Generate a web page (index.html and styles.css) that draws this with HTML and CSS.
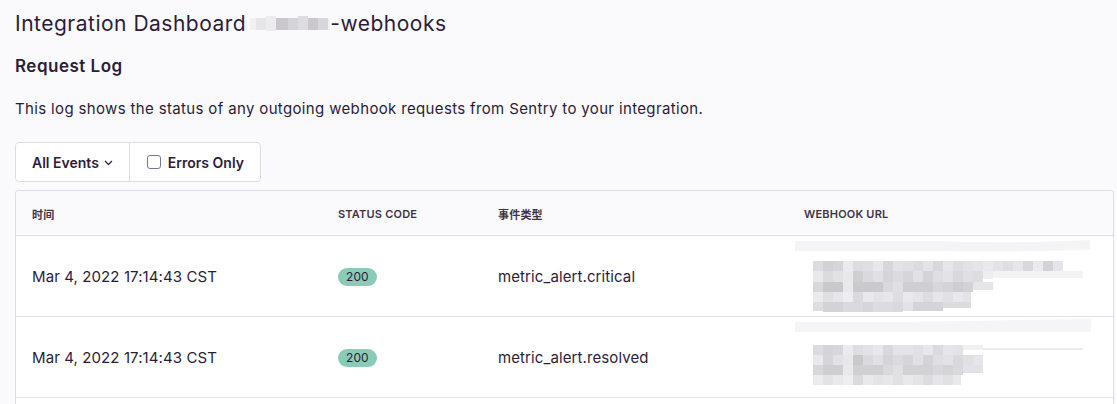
FILE: index.html
```html
<!DOCTYPE html>
<html lang="en">
<head>
<meta charset="utf-8">
<title>Integration Dashboard</title>
<link rel="stylesheet" href="styles.css">
</head>
<body>
<div class="page">
  <h1 class="title">Integration Dashboard <svg class="blur-title" width="80" height="18" viewBox="0 0 80 18"><rect x="0" y="3" width="80" height="12" fill="#f1f0f2"/><rect x="6" y="3" width="10" height="12" fill="#e6e5e8"/><rect x="16" y="1" width="10" height="15" fill="#ecebee"/><rect x="26" y="3" width="12" height="12" fill="#c9c7cc"/><rect x="38" y="3" width="10" height="12" fill="#d4d3d7"/><rect x="48" y="1" width="10" height="14" fill="#dddce0"/><rect x="58" y="3" width="10" height="12" fill="#cac8cd"/><rect x="68" y="3" width="10" height="12" fill="#d8d7db"/></svg>-webhooks</h1>
  <h2 class="section-title">Request Log</h2>
  <p class="description">This log shows the status of any outgoing webhook requests from Sentry to your integration.</p>

  <div class="filters">
    <button class="filter-btn">All Events <svg class="chevron" width="9" height="6" viewBox="0 0 9 6"><path d="M1 1l3.5 3.5L8 1" fill="none" stroke="#2b1d38" stroke-width="1.2"/></svg></button>
    <label class="filter-btn check"><span class="checkbox"></span>Errors Only</label>
  </div>

  <div class="panel">
    <div class="row head">
      <div>时间</div>
      <div>STATUS CODE</div>
      <div>事件类型</div>
      <div>WEBHOOK URL</div>
    </div>
    <div class="row">
      <div>Mar 4, 2022 17:14:43 CST</div>
      <div><span class="badge">200</span></div>
      <div>metric_alert.critical</div>
      <div class="url">
        <svg width="305" height="78" viewBox="0 0 305 78">
          <path d="M0 5 H140 Q220 8 295 4 V14 Q220 16 140 15 H0 Z" fill="#f4f3f6"/>
          <g>
            <rect x="18" y="25" width="10" height="10" fill="#dcdbde"/><rect x="28" y="25" width="10" height="10" fill="#d2d1d5"/><rect x="38" y="25" width="10" height="10" fill="#d6d5d9"/><rect x="48" y="25" width="10" height="10" fill="#ebeaed"/><rect x="58" y="25" width="10" height="10" fill="#dddce0"/><rect x="68" y="25" width="10" height="10" fill="#dfdee2"/><rect x="78" y="25" width="10" height="10" fill="#e8e7ea"/><rect x="88" y="25" width="10" height="10" fill="#d7d6da"/><rect x="98" y="25" width="10" height="10" fill="#e3e2e6"/><rect x="108" y="25" width="10" height="10" fill="#e0dfe3"/><rect x="118" y="25" width="10" height="10" fill="#dcdbdf"/><rect x="128" y="25" width="10" height="10" fill="#e4e3e7"/><rect x="138" y="25" width="10" height="10" fill="#d8d7db"/><rect x="148" y="25" width="10" height="10" fill="#e6e5e9"/><rect x="158" y="25" width="10" height="10" fill="#dedde1"/><rect x="168" y="25" width="10" height="10" fill="#e2e1e5"/><rect x="178" y="25" width="10" height="10" fill="#e5e4e8"/><rect x="188" y="25" width="10" height="10" fill="#eae9ec"/><rect x="198" y="25" width="10" height="10" fill="#e4e3e7"/><rect x="208" y="25" width="10" height="10" fill="#dfdee2"/><rect x="218" y="25" width="10" height="10" fill="#e6e5e9"/><rect x="228" y="25" width="10" height="10" fill="#d9d8dc"/><rect x="238" y="25" width="10" height="10" fill="#eceaee"/><rect x="248" y="25" width="10" height="10" fill="#d3d2d6"/><rect x="258" y="25" width="10" height="10" fill="#e5e4e8"/>
            <rect x="18" y="35" width="10" height="11" fill="#e9e8eb"/><rect x="28" y="35" width="10" height="11" fill="#dbdadd"/><rect x="38" y="35" width="10" height="11" fill="#e2e1e4"/><rect x="48" y="35" width="10" height="11" fill="#e8e7ea"/><rect x="58" y="35" width="10" height="11" fill="#cfced2"/><rect x="68" y="35" width="10" height="11" fill="#dad9dd"/><rect x="78" y="35" width="10" height="11" fill="#e1e0e4"/><rect x="88" y="35" width="10" height="11" fill="#d5d4d8"/><rect x="98" y="35" width="10" height="11" fill="#dbdade"/><rect x="108" y="35" width="10" height="11" fill="#d6d5d9"/><rect x="118" y="35" width="10" height="11" fill="#e1e0e4"/><rect x="128" y="35" width="10" height="11" fill="#d4d3d7"/><rect x="138" y="35" width="10" height="11" fill="#dfdee2"/><rect x="148" y="35" width="10" height="11" fill="#e3e2e6"/><rect x="158" y="35" width="10" height="11" fill="#d9d8dc"/><rect x="168" y="35" width="10" height="11" fill="#e0dfe3"/><rect x="178" y="35" width="10" height="11" fill="#dddce0"/><rect x="188" y="35" width="10" height="8" fill="#eeedf0"/><rect x="198" y="35" width="90" height="7" fill="#f3f2f5"/>
            <rect x="18" y="46" width="10" height="10" fill="#d8d7db"/><rect x="28" y="46" width="20" height="10" fill="#c9c8cc"/><rect x="48" y="46" width="10" height="10" fill="#e9e8eb"/><rect x="58" y="46" width="30" height="10" fill="#cac9cd"/><rect x="88" y="46" width="10" height="10" fill="#d9d8dc"/><rect x="98" y="46" width="10" height="10" fill="#e0dfe3"/><rect x="108" y="46" width="30" height="10" fill="#cfced2"/><rect x="138" y="46" width="10" height="10" fill="#d8d7db"/><rect x="148" y="46" width="10" height="10" fill="#d4d3d7"/><rect x="158" y="46" width="10" height="10" fill="#cecdd1"/><rect x="168" y="46" width="10" height="10" fill="#d3d2d6"/><rect x="178" y="46" width="20" height="8" fill="#e6e5e8"/>
            <rect x="18" y="56" width="10" height="10" fill="#ebeaed"/><rect x="28" y="56" width="10" height="10" fill="#e0dfe2"/><rect x="38" y="56" width="10" height="10" fill="#e6e5e8"/><rect x="48" y="56" width="10" height="10" fill="#eeedf0"/><rect x="58" y="56" width="10" height="10" fill="#dad9dc"/><rect x="68" y="56" width="10" height="10" fill="#e9e8eb"/><rect x="78" y="56" width="10" height="10" fill="#e4e3e6"/><rect x="88" y="56" width="10" height="10" fill="#e7e6e9"/><rect x="98" y="56" width="10" height="10" fill="#dedde0"/><rect x="108" y="56" width="10" height="10" fill="#e9e8eb"/><rect x="118" y="56" width="10" height="10" fill="#e5e4e7"/><rect x="128" y="56" width="10" height="10" fill="#dddce0"/><rect x="138" y="56" width="10" height="10" fill="#e6e5e8"/><rect x="148" y="56" width="10" height="10" fill="#e1e0e3"/><rect x="158" y="56" width="10" height="10" fill="#e9e8eb"/><rect x="168" y="56" width="8" height="10" fill="#e4e3e6"/>
            <rect x="18" y="66" width="10" height="9" fill="#dedde0"/><rect x="28" y="66" width="20" height="10" fill="#d3d2d6"/><rect x="48" y="66" width="20" height="10" fill="#dad9dd"/><rect x="68" y="66" width="10" height="10" fill="#d6d5d9"/><rect x="78" y="66" width="20" height="10" fill="#dcdbdf"/><rect x="98" y="66" width="10" height="10" fill="#d9d8dc"/><rect x="108" y="66" width="10" height="9" fill="#e3e2e6"/><rect x="118" y="66" width="30" height="9" fill="#d4d3d7"/><rect x="148" y="66" width="28" height="6" fill="#dcdbdf"/>
          </g>
        </svg>
      </div>
    </div>
    <div class="row">
      <div>Mar 4, 2022 17:14:43 CST</div>
      <div><span class="badge">200</span></div>
      <div>metric_alert.resolved</div>
      <div class="url">
        <svg width="305" height="78" viewBox="0 0 305 78">
          <path d="M-8 5 H110 Q200 3 296 2 V15 H-8 Z" fill="#f5f4f7"/>
          <g>
            <rect x="18" y="28" width="10" height="10" fill="#dcdbde"/><rect x="28" y="28" width="10" height="10" fill="#d4d3d7"/><rect x="38" y="28" width="10" height="10" fill="#d7d6da"/><rect x="48" y="28" width="10" height="10" fill="#ebeaed"/><rect x="58" y="28" width="10" height="10" fill="#dedde1"/><rect x="68" y="28" width="10" height="10" fill="#e3e2e6"/><rect x="78" y="28" width="10" height="10" fill="#e8e7ea"/><rect x="88" y="28" width="10" height="10" fill="#d9d8dc"/><rect x="98" y="28" width="10" height="10" fill="#e4e3e7"/><rect x="108" y="28" width="10" height="10" fill="#e4e3e7"/><rect x="118" y="28" width="10" height="10" fill="#e1e0e4"/><rect x="128" y="28" width="10" height="10" fill="#e8e7eb"/><rect x="138" y="28" width="10" height="10" fill="#dbdade"/><rect x="148" y="28" width="10" height="10" fill="#e6e5e9"/><rect x="158" y="28" width="10" height="10" fill="#e3e2e6"/><rect x="168" y="28" width="20" height="5" fill="#f0eff2"/><rect x="188" y="31" width="100" height="2" fill="#eceaee"/>
            <rect x="18" y="38" width="10" height="10" fill="#e9e8eb"/><rect x="28" y="38" width="10" height="10" fill="#d6d5d9"/><rect x="38" y="38" width="10" height="10" fill="#e2e1e4"/><rect x="48" y="38" width="10" height="10" fill="#e8e7ea"/><rect x="58" y="38" width="10" height="10" fill="#c9c8cc"/><rect x="68" y="38" width="10" height="10" fill="#dad9dd"/><rect x="78" y="38" width="10" height="10" fill="#e1e0e4"/><rect x="88" y="38" width="10" height="10" fill="#d5d4d8"/><rect x="98" y="38" width="10" height="10" fill="#dbdade"/><rect x="108" y="38" width="10" height="10" fill="#d6d5d9"/><rect x="118" y="38" width="10" height="10" fill="#e1e0e4"/><rect x="128" y="38" width="10" height="10" fill="#d4d3d7"/><rect x="138" y="38" width="10" height="10" fill="#dfdee2"/><rect x="148" y="38" width="10" height="10" fill="#e3e2e6"/><rect x="158" y="38" width="10" height="10" fill="#d9d8dc"/><rect x="168" y="38" width="10" height="10" fill="#e0dfe3"/><rect x="178" y="38" width="10" height="10" fill="#e6e5e9"/>
            <rect x="18" y="48" width="10" height="10" fill="#d8d7db"/><rect x="28" y="48" width="20" height="10" fill="#cfced2"/><rect x="48" y="48" width="10" height="10" fill="#e9e8eb"/><rect x="58" y="48" width="30" height="10" fill="#d0cfd3"/><rect x="88" y="48" width="10" height="10" fill="#dad9dd"/><rect x="98" y="48" width="10" height="10" fill="#e0dfe3"/><rect x="108" y="48" width="30" height="10" fill="#d2d1d5"/><rect x="138" y="48" width="10" height="10" fill="#d8d7db"/><rect x="148" y="48" width="10" height="10" fill="#d4d3d7"/><rect x="158" y="48" width="10" height="10" fill="#d9d8dc"/><rect x="168" y="48" width="20" height="8" fill="#e2e1e5"/>
            <rect x="18" y="58" width="10" height="10" fill="#ebeaed"/><rect x="28" y="58" width="10" height="10" fill="#e3e2e5"/><rect x="38" y="58" width="10" height="10" fill="#e9e8eb"/><rect x="48" y="58" width="10" height="10" fill="#eeedf0"/><rect x="58" y="58" width="10" height="10" fill="#dad9dc"/><rect x="68" y="58" width="10" height="10" fill="#e9e8eb"/><rect x="78" y="58" width="10" height="10" fill="#e4e3e6"/><rect x="88" y="58" width="10" height="10" fill="#e7e6e9"/><rect x="98" y="58" width="10" height="10" fill="#e1e0e3"/><rect x="108" y="58" width="10" height="10" fill="#e9e8eb"/><rect x="118" y="58" width="10" height="10" fill="#e5e4e7"/><rect x="128" y="58" width="10" height="10" fill="#dddce0"/><rect x="138" y="58" width="10" height="10" fill="#e6e5e8"/><rect x="148" y="58" width="10" height="10" fill="#e1e0e3"/><rect x="158" y="58" width="8" height="10" fill="#e9e8eb"/>
          </g>
        </svg>
      </div>
    </div>
    <div class="row tail"></div>
  </div>
</div>
</body>
</html>
```

FILE: styles.css
```css
* { box-sizing: border-box; }

body {
  margin: 0;
  background: #faf9fb;
  color: #2b1d38;
  font-family: Inter, "Noto Sans", "Noto Sans CJK SC", sans-serif;
}

.page {
  padding: 12px 3px 0 15px;
}

.title {
  margin: 0;
  font-size: 21px;
  line-height: 24px;
  font-weight: 400;
  letter-spacing: 0.5px;
  display: flex;
  align-items: center;
}

.blur-title {
  margin-left: 4px;
  margin-right: 0;
}

.section-title {
  margin: 18px 0 0;
  font-size: 17px;
  line-height: 24px;
  font-weight: 600;
  letter-spacing: 0.5px;
}

.description {
  margin: 20px 0 0;
  font-size: 15px;
  line-height: 22px;
  letter-spacing: 0.35px;
}

.filters {
  margin-top: 22px;
  display: inline-flex;
  height: 40px;
  background: #fff;
  border: 1px solid #e0dce5;
  border-radius: 4px;
}

.filter-btn {
  display: flex;
  align-items: center;
  padding: 0 16px;
  font-family: inherit;
  font-size: 14px;
  font-weight: 600;
  color: #2b1d38;
  background: none;
  border: none;
}

.filter-btn + .filter-btn {
  border-left: 1px solid #e0dce5;
}

.chevron {
  margin-left: 5px;
  margin-top: 2px;
}

.check {
  padding: 0 16px 0 17px;
}

.checkbox {
  width: 14px;
  height: 14px;
  border: 1px solid #80708f;
  border-radius: 3px;
  margin-right: 7px;
  background: #fff;
}

.panel {
  margin-top: 8px;
  background: #fff;
  border: 1px solid #e0dce5;
  border-radius: 4px 4px 0 0;
  border-bottom: none;
}

.row {
  display: grid;
  grid-template-columns: 306px 160px 306px 1fr;
  align-items: center;
  height: 81px;
  padding: 0 16px;
  font-size: 15px;
  letter-spacing: 0.1px;
  border-top: 1px solid #e7e1ec;
}

.row.head {
  height: 45px;
  border-top: none;
  border-bottom: 1px solid #e0dce5;
  background: #faf9fb;
  border-radius: 4px 4px 0 0;
  font-size: 11px;
  font-weight: 600;
  color: #3e3446;
  letter-spacing: 0.2px;
  padding-top: 1px;
}

.row.head + .row { border-top: none; height: 80px; }

.row.tail { height: 8px; }

.badge {
  display: inline-block;
  background: #8acbb7;
  color: #2b1d38;
  font-size: 12px;
  line-height: 18px;
  padding: 0 8px;
  border-radius: 10px;
}

.url {
  margin-left: -9px;
  align-self: stretch;
  display: flex;
  align-items: flex-start;
}

.url svg { display: block; }
```
